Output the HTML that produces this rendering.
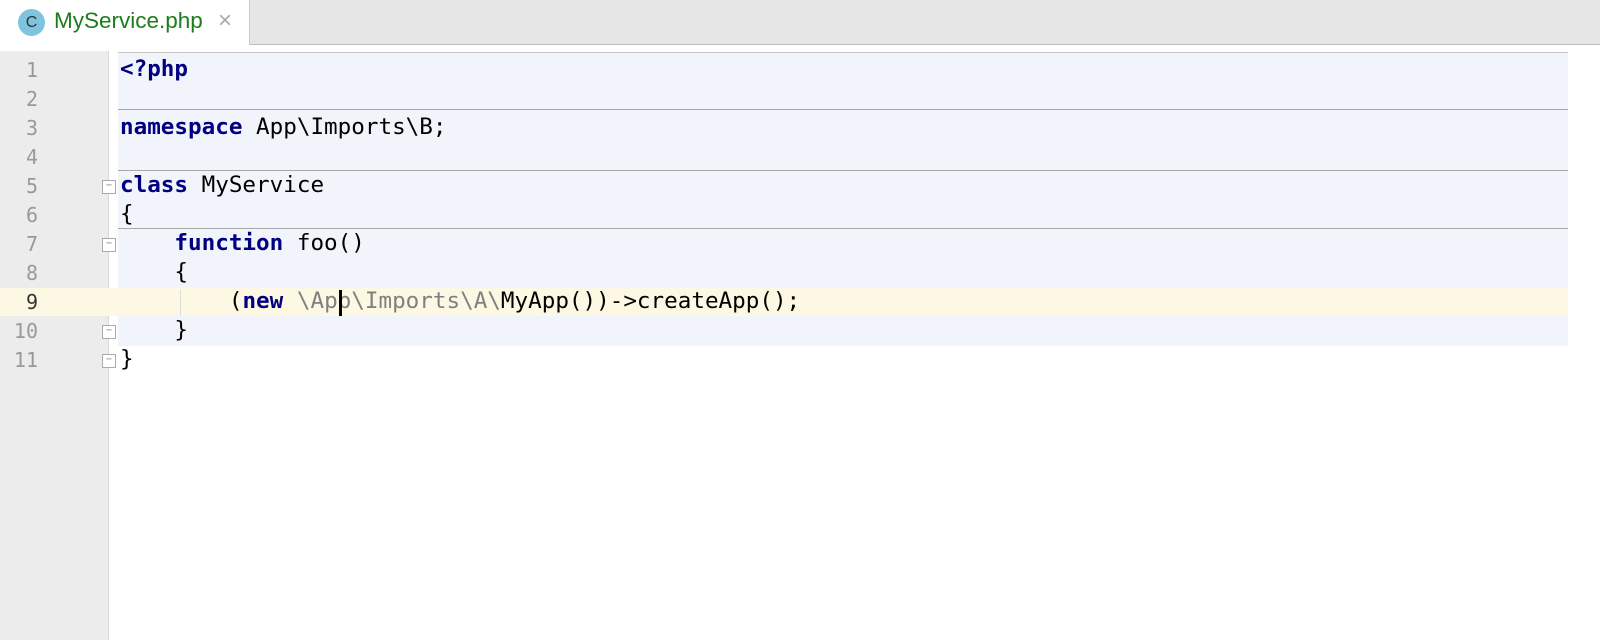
<!DOCTYPE html><html><head><style>
body{margin:0;width:1600px;height:640px;overflow:hidden;background:#fff;font-family:"DejaVu Sans Mono",monospace;position:relative}
.tabbar{position:absolute;left:0;top:0;width:1600px;height:44px;background:#e6e6e6;border-bottom:1px solid #bdbdbd}
.tab{position:absolute;left:0;top:0;width:249px;height:45px;background:#fff;border-right:1px solid #c8c8c8}
.ic{position:absolute;left:18px;top:9px;width:27px;height:27px;border-radius:50%;background:#7fc4df;color:#333;font:16px "Liberation Sans",sans-serif;text-align:center;line-height:27px}
.tn{position:absolute;left:54px;top:8px;font:22.5px "Liberation Sans",sans-serif;color:#1b7d1b}
.x{position:absolute;left:218px;top:7px;font:24px "Liberation Sans",sans-serif;color:#aaa}
.gut{position:absolute;left:0;top:51px;width:108px;height:589px;background:#ececec;border-right:1px solid #d8d8d8}
.blue{position:absolute;left:118px;top:52px;width:1450px;height:293px;background:#f1f4fa;border-top:1px solid #c4c4c4}
.sep{position:absolute;left:118px;width:1450px;height:1px;background:#a8a8a8}
.hl{position:absolute;left:0;top:288px;width:1568px;height:28px;background:#fcf8e3}
.ln{position:absolute;left:0;width:38px;text-align:right;font-size:20px;color:#999}
.code{position:absolute;left:120px;font-size:22.6px;color:#000;white-space:pre;line-height:29px}
b{color:#000080}
.g{color:#808080}
.fold{position:absolute;left:102px;width:12px;height:12px;border:1px solid #aaa;background:#fff;font-size:10px;line-height:10px;text-align:center;color:#888}
</style></head><body>
<div class="tabbar"></div>
<div class="tab"><div class="ic">C</div><div class="tn">MyService.php</div><div class="x">×</div></div>
<div class="gut"></div>
<div class="blue"></div>
<div class="hl"></div>
<div class="sep" style="top:109px"></div>
<div class="sep" style="top:170px"></div>
<div class="sep" style="top:228px"></div>
<div style="position:absolute;left:180px;top:290px;width:1px;height:26px;background:#ddd"></div>
<div class="fold" style="top:180px">−</div>
<div class="fold" style="top:238px">−</div>
<div class="fold" style="top:325px">−</div>
<div class="fold" style="top:354px">−</div>
<div class="ln" style="top:58px">1</div><div class="ln" style="top:87px">2</div><div class="ln" style="top:116px">3</div><div class="ln" style="top:145px">4</div><div class="ln" style="top:174px">5</div><div class="ln" style="top:203px">6</div><div class="ln" style="top:232px">7</div><div class="ln" style="top:261px">8</div><div class="ln" style="top:290px;color:#333">9</div><div class="ln" style="top:319px">10</div><div class="ln" style="top:348px">11</div>
<div class="code" style="top:55px"><b>&lt;?php</b>

<b>namespace</b> App\Imports\B;

<b>class</b> MyService
{
    <b>function</b> foo()
    {
        (<b>new</b> <span class="g">\App\Imports\A\</span>MyApp())-&gt;createApp();
    }
}</div>
<div style="position:absolute;left:339px;top:290px;width:3px;height:26px;background:#000"></div>
</body></html>
